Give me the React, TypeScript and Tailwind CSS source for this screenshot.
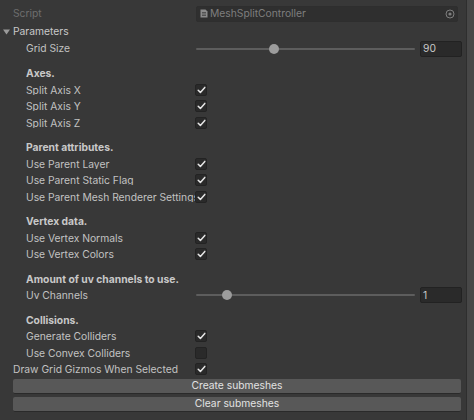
import React from 'react';

const font = { fontFamily: 'Inter, "Noto Sans", sans-serif' };

function Check({ on = true }: { on?: boolean }) {
  return (
    <div className="flex h-[12px] w-[12px] items-center justify-center rounded-[2px] border border-[#232323] bg-[#2a2a2a]">
      {on && (
        <svg width="9" height="8" viewBox="0 0 9 8">
          <path d="M1.2 4.3 L3.4 6.4 L7.8 1.4" fill="none" stroke="#e6e6e6" strokeWidth="1.5" strokeLinecap="round" strokeLinejoin="round" />
        </svg>
      )}
    </div>
  );
}

function Row({ label, indent = true, children }: { label: string; indent?: boolean; children?: React.ReactNode }) {
  return (
    <div className="flex h-[16.5px] items-center">
      <div className={`w-[195px] shrink-0 overflow-hidden whitespace-nowrap pr-[1px] text-[#c2c2c2] ${indent ? 'pl-[26px]' : 'pl-[13px]'}`}>
        {label}
      </div>
      <div className="flex flex-1 items-center">{children}</div>
    </div>
  );
}

function Header({ text }: { text: string }) {
  return (
    <div className="mt-[8px] flex h-[16.5px] items-center pl-[26px] font-bold text-[#c8c8c8]">{text}</div>
  );
}

function Slider({ pct, value }: { pct: number; value: string }) {
  return (
    <div className="flex flex-1 items-center">
      <div className="relative ml-[1px] h-[10px] w-[219px]">
        <div className="absolute left-0 right-0 top-[4px] h-[2px] rounded-full bg-[#5d5d5d]" />
        <div
          className="absolute top-0 h-[10px] w-[10px] -translate-x-1/2 rounded-full bg-[#9c9c9c]"
          style={{ left: `${pct}%` }}
        />
      </div>
      <div className="ml-[5px] flex h-[16px] w-[42px] items-center rounded-[2px] border border-[#222] bg-[#2a2a2a] pl-[2px] text-[#c8c8c8]">
        {value}
      </div>
    </div>
  );
}

export default function App() {
  return (
    <div className="flex h-[420px] w-[474px] bg-[#383838] text-[10.3px] leading-none" style={font}>
      <div className="flex flex-1 flex-col pt-[5px]">
        {/* Script */}
        <div className="flex h-[17px] items-center">
          <div className="w-[196px] shrink-0 pl-[13px] text-[#6e6e6e]">Script</div>
          <div className="flex h-[16px] w-[262px] items-center rounded-[2px] border border-[#2e2e2e] bg-[#2f2f2f] pl-[3px] pr-[2px] text-[#7e7e7e]">
            <svg width="8" height="9" viewBox="0 0 8 9" className="mr-[2px]">
              <path d="M0.5 0.5 H5.5 L7.5 2.5 V8.5 H0.5 Z" fill="#8a8a8a" />
              <path d="M2 3.5 H6 M2 5 H6 M2 6.5 H6" stroke="#3a3a3a" strokeWidth="0.7" />
            </svg>
            <span className="flex-1">MeshSplitController</span>
            <svg width="10" height="10" viewBox="0 0 10 10">
              <circle cx="5" cy="5" r="4" fill="none" stroke="#7e7e7e" strokeWidth="1" />
              <circle cx="5" cy="5" r="1.6" fill="#7e7e7e" />
            </svg>
          </div>
        </div>
        {/* Parameters foldout */}
        <div className="mt-[1px] flex h-[17px] items-center">
          <svg width="8" height="6" viewBox="0 0 8 6" className="ml-[3px] mr-[2px]">
            <path d="M0 0.5 H7 L3.5 5.5 Z" fill="#9a9a9a" />
          </svg>
          <span className="text-[#c8c8c8]">Parameters</span>
        </div>
        <div className="flex h-[17px] items-center">
          <div className="w-[195px] shrink-0 pl-[26px] text-[#c2c2c2]">Grid Size</div>
          <Slider pct={35.5} value="90" />
        </div>

        <Header text="Axes." />
        <Row label="Split Axis X"><Check /></Row>
        <Row label="Split Axis Y"><Check /></Row>
        <Row label="Split Axis Z"><Check /></Row>

        <Header text="Parent attributes." />
        <Row label="Use Parent Layer"><Check /></Row>
        <Row label="Use Parent Static Flag"><Check /></Row>
        <Row label="Use Parent Mesh Renderer Settings"><Check /></Row>

        <Header text="Vertex data." />
        <Row label="Use Vertex Normals"><Check /></Row>
        <Row label="Use Vertex Colors"><Check /></Row>

        <Header text="Amount of uv channels to use." />
        <div className="flex h-[16.5px] items-center">
          <div className="w-[195px] shrink-0 pl-[26px] text-[#c2c2c2]">Uv Channels</div>
          <Slider pct={14} value="1" />
        </div>

        <Header text="Collisions." />
        <Row label="Generate Colliders"><Check /></Row>
        <Row label="Use Convex Colliders"><Check on={false} /></Row>
        <Row label="Draw Grid Gizmos When Selected" indent={false}><Check /></Row>

        <div className="ml-[13px] mr-[5px] mt-[1px] flex flex-col gap-[3px]">
          <button className="flex h-[15px] items-center justify-center rounded-[2px] border-b border-[#2a2a2a] bg-[#585858] text-[#e2e2e2]">
            Create submeshes
          </button>
          <button className="flex h-[15px] items-center justify-center rounded-[2px] border-b border-[#2a2a2a] bg-[#585858] text-[#e2e2e2]">
            Clear submeshes
          </button>
        </div>
      </div>
      <div className="w-[8px] border-l border-[#2e2e2e] bg-[#474747]" />
    </div>
  );
}
